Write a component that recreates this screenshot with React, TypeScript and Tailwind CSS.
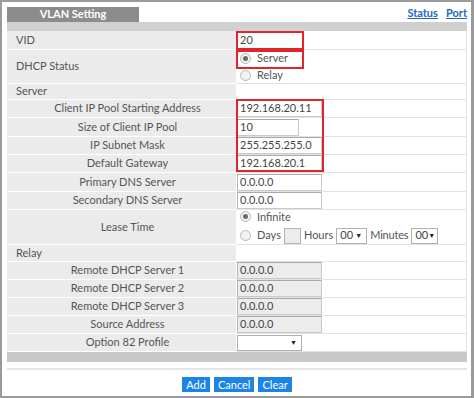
import type { ReactNode } from "react";

const FONT = "font-['Lato','Open_Sans',sans-serif]";

function Row({
  label,
  h,
  center = true,
  children,
}: {
  label: string;
  h: string;
  center?: boolean;
  children?: ReactNode;
}) {
  return (
    <div className={`flex ${h}`}>
      <div
        className={`flex w-[229px] shrink-0 items-center border-b border-white bg-[#ebebeb] text-[11px] text-[#555] ${
          center ? "justify-center pl-[12px]" : "pl-[9px]"
        }`}
      >
        {label}
      </div>
      <div className="flex flex-1 items-center border-b border-r border-[#e2e2e2] pl-px">
        {children}
      </div>
    </div>
  );
}

function TextBox({
  value,
  w = "w-[85px]",
  disabled = false,
}: {
  value: string;
  w?: string;
  disabled?: boolean;
}) {
  return (
    <div
      className={`flex h-[17px] ${w} items-center border border-[#c9c9c9] border-t-[#a9a9a9] border-l-[#b5b5b5] px-[2px] text-[11px] text-[#444] ${
        disabled ? "bg-[#ececec]" : "bg-white"
      }`}
    >
      {value}
    </div>
  );
}

function Radio({ checked, label }: { checked?: boolean; label: string }) {
  return (
    <div className="flex h-[13px] items-center gap-[6px] text-[11px] text-[#555]">
      <span className="ml-[2px] flex h-[11px] w-[11px] items-center justify-center rounded-full border border-[#b8b8b8] bg-[#f2f2f2]">
        {checked && <span className="h-[5px] w-[5px] rounded-full bg-[#6a6a6a]" />}
      </span>
      {label}
    </div>
  );
}

function Select({ value, w }: { value: string; w: string }) {
  return (
    <div
      className={`flex h-[16px] ${w} items-center justify-between border border-[#b0b0b0] bg-white pl-[3px] pr-[4px] text-[11px] text-[#444]`}
    >
      <span>{value}</span>
      <span className="text-[7px] text-[#222]">▼</span>
    </div>
  );
}

export default function App() {
  return (
    <div className={`relative h-[398px] w-[474px] bg-white ${FONT}`}>
      <div className="h-full w-full border-b-2 border-l-2 border-r-[3px] border-t-2 border-[#9b9b9b] pl-[5px] pr-[4px] pt-[5px]">
        <div className="flex h-[15px] items-end justify-between">
          <div className="flex h-[15px] w-[132px] items-center justify-center bg-[#8c8c8c] text-[11px] font-bold text-white">
            VLAN Setting
          </div>
          <div className="flex gap-[8px] pb-[1px] text-[11px] font-bold text-[#2266c0] underline">
            <span>Status</span>
            <span>Port</span>
          </div>
        </div>
        <div className="h-[9px] bg-[#d0d0d0]" />

        <Row label="VID" h="h-[19px]" center={false}>
          <TextBox value="20" w="w-[66px]" />
        </Row>
        <Row label="DHCP Status" h="h-[34px]" center={false}>
          <div className="flex flex-col gap-[4px] pl-[1px]">
            <Radio checked label="Server" />
            <Radio label="Relay" />
          </div>
        </Row>
        <Row label="Server" h="h-[16px]" center={false} />
        <Row label="Client IP Pool Starting Address" h="h-[18px]">
          <TextBox value="192.168.20.11" />
        </Row>
        <Row label="Size of Client IP Pool" h="h-[19px]">
          <TextBox value="10" w="w-[62px]" />
        </Row>
        <Row label="IP Subnet Mask" h="h-[18px]">
          <TextBox value="255.255.255.0" />
        </Row>
        <Row label="Default Gateway" h="h-[18px]">
          <TextBox value="192.168.20.1" />
        </Row>
        <Row label="Primary DNS Server" h="h-[19px]">
          <TextBox value="0.0.0.0" />
        </Row>
        <Row label="Secondary DNS Server" h="h-[18px]">
          <TextBox value="0.0.0.0" />
        </Row>
        <Row label="Lease Time" h="h-[35px]">
          <div className="flex flex-col gap-[4px] pl-[1px]">
            <Radio checked label="Infinite" />
            <div className="flex items-center gap-[3px] text-[11px] text-[#555]">
              <Radio label="Days" />
              <span className="h-[16px] w-[17px] border border-[#b5b5b5] bg-[#ececec]" />
              <span>Hours</span>
              <Select value="00" w="w-[31px]" />
              <span className="tracking-[-0.2px]">Minutes</span>
              <Select value="00" w="w-[27px]" />
            </div>
          </div>
        </Row>
        <Row label="Relay" h="h-[17px]" center={false} />
        <Row label="Remote DHCP Server 1" h="h-[18px]">
          <TextBox value="0.0.0.0" disabled />
        </Row>
        <Row label="Remote DHCP Server 2" h="h-[18px]">
          <TextBox value="0.0.0.0" disabled />
        </Row>
        <Row label="Remote DHCP Server 3" h="h-[18px]">
          <TextBox value="0.0.0.0" disabled />
        </Row>
        <Row label="Source Address" h="h-[18px]">
          <TextBox value="0.0.0.0" disabled />
        </Row>
        <Row label="Option 82 Profile" h="h-[18px]">
          <Select value="" w="w-[65px]" />
        </Row>
        <div className="h-[10px] bg-[#c8c8c8]" />
        <div className="mt-[6px] h-[2px] bg-[#e4e4e4]" />
        <div className="mt-[7px] flex justify-center gap-[4px]">
          {["Add", "Cancel", "Clear"].map((b) => (
            <button
              key={b}
              type="button"
              className="h-[15px] bg-[#1c84e6] px-[4px] text-[11px] leading-[15px] text-white"
            >
              {b}
            </button>
          ))}
        </div>
      </div>

      <div className="absolute left-[236px] top-[31px] h-[19px] w-[68px] border-2 border-[#e0242c]" />
      <div className="absolute left-[236px] top-[50px] h-[19px] w-[68px] border-2 border-[#e0242c]" />
      <div className="absolute left-[236px] top-[99px] h-[73px] w-[88px] border-2 border-[#e0242c]" />
    </div>
  );
}
